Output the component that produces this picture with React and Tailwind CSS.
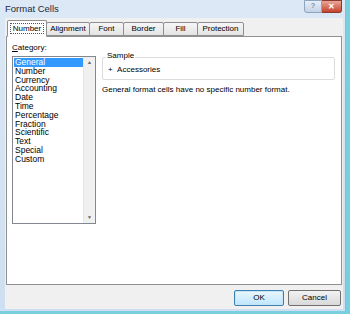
import { useState } from 'react';

const tabs = ['Number', 'Alignment', 'Font', 'Border', 'Fill', 'Protection'];
const tabWidths = ['w-[40px]', 'w-[44px]', 'w-[35px]', 'w-[41px]', 'w-[35px]', 'w-[47px]'];

const categories = [
  'General',
  'Number',
  'Currency',
  'Accounting',
  'Date',
  'Time',
  'Percentage',
  'Fraction',
  'Scientific',
  'Text',
  'Special',
  'Custom',
];

export default function App() {
  const [selected, setSelected] = useState('General');

  return (
    <div className="w-[350px] h-[314px] bg-[#77cfe0] overflow-hidden font-['Liberation_Sans',sans-serif] text-[8px] text-black">
      <div className="w-[346px] h-[311px] flex flex-col bg-gradient-to-b from-[#dce8f5] to-[#cddff0] border-r border-[#9fb4cc]">
        {/* title bar */}
        <div className="h-[18px] flex items-center justify-between pl-[5px] pr-[3px]">
          <span className="text-[9.5px] text-[#1e2b3c]">Format Cells</span>
          <div className="flex self-start">
            <button className="w-[18px] h-[13px] border border-[#8ea3bd] rounded-bl-[3px] bg-gradient-to-b from-[#e6eef8] to-[#c3d3e6] text-[7px] text-[#4a5a70] flex items-center justify-center">
              ?
            </button>
            <button className="w-[20px] h-[13px] border border-[#8b3a2e] border-l-0 rounded-br-[3px] bg-gradient-to-b from-[#e9a597] to-[#c4402c] text-[8px] text-white font-bold flex items-center justify-center">
              ✕
            </button>
          </div>
        </div>

        {/* client */}
        <div className="flex-1 flex flex-col bg-[#f0f0f0] ml-[5px] mr-[2px] mb-[2px]">
          {/* tab strip */}
          <div className="flex items-end h-[18px] pl-[2px]">
            {tabs.map((t, i) => (
              <div
                key={t}
                className={`${tabWidths[i]} flex items-center justify-center border border-[#8e8f8f] rounded-t-[2px] ${
                  i === 0
                    ? 'h-[17px] bg-white border-b-white -mb-px z-10'
                    : 'h-[14px] bg-gradient-to-b from-[#f6f6f6] to-[#e4e4e4] -ml-px'
                }`}
              >
                {i === 0 ? (
                  <span className="border border-dotted border-[#555] px-[2px] leading-[9px]">{t}</span>
                ) : (
                  <span>{t}</span>
                )}
              </div>
            ))}
          </div>

          {/* panel */}
          <div className="h-[249px] bg-white border border-[#8e8f8f] mx-px flex gap-[6px] pl-[5px] pr-[6px] pt-[6px]">
            <div className="w-[84px] flex flex-col">
              <span className="leading-[10px]">
                <span className="underline">C</span>ategory:
              </span>
              <div className="mt-[3px] h-[168px] border border-[#828790] flex">
                <div className="flex-1 flex flex-col pt-px pl-px">
                  {categories.map((c) => (
                    <div
                      key={c}
                      onClick={() => setSelected(c)}
                      className={`h-[8.8px] leading-[8.8px] pl-[1px] text-[8.5px] ${
                        selected === c ? 'bg-[#3399ff] text-white' : ''
                      }`}
                    >
                      {c}
                    </div>
                  ))}
                </div>
                <div className="w-[12px] bg-[#f0f0f0] border-l border-[#e6e6e6] flex flex-col justify-between items-center py-[3px]">
                  <span className="text-[5px] text-[#606060] leading-none">▲</span>
                  <span className="text-[5px] text-[#606060] leading-none">▼</span>
                </div>
              </div>
            </div>

            <div className="flex-1 flex flex-col pt-[14px]">
              <div className="relative h-[23px] border border-[#dcdcdc] rounded-[2px] flex items-end pb-[3px] pl-[5px]">
                <span className="absolute -top-[7px] left-[3px] bg-white px-px leading-[10px]">Sample</span>
                <span>+ &nbsp;Accessories</span>
              </div>
              <span className="mt-[4px]">General format cells have no specific number format.</span>
            </div>
          </div>

          {/* buttons */}
          <div className="flex-1 flex justify-end items-center gap-[4px] pr-[2px] pt-[1px]">
            <button className="w-[50px] h-[16px] border border-[#3c7fb1] rounded-[2px] bg-gradient-to-b from-[#eaf6fd] to-[#bee6fd] shadow-[inset_0_0_0_1px_#c4e5f6]">
              OK
            </button>
            <button className="w-[53px] h-[16px] border border-[#707070] rounded-[2px] bg-gradient-to-b from-[#f2f2f2] to-[#d9d9d9]">
              Cancel
            </button>
          </div>
        </div>
      </div>
    </div>
  );
}
